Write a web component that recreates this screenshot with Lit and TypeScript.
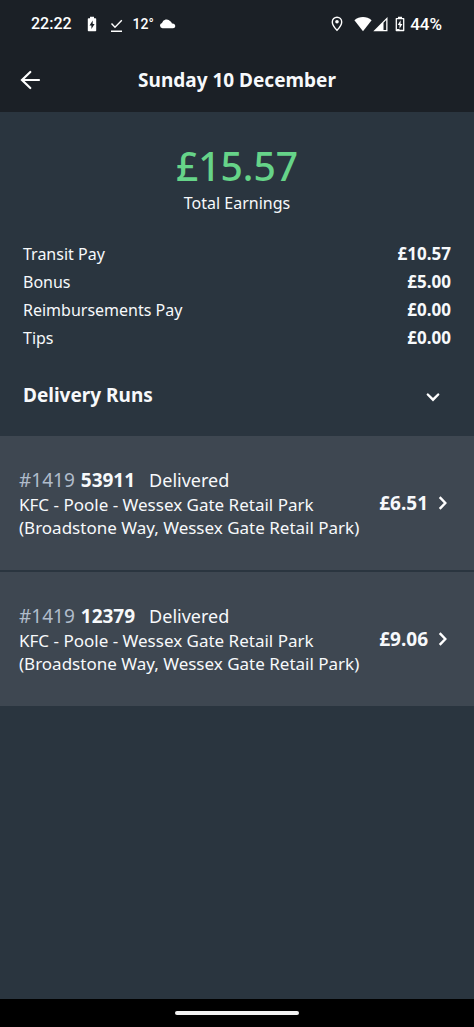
import { LitElement, html, css } from "lit";
import { customElement, property, state } from "lit/decorators.js";

interface Run {
  store: string;
  order: string;
  status: string;
  place: string;
  address: string;
  amount: string;
}

@customElement("status-bar")
class StatusBar extends LitElement {
  static styles = css`
    :host {
      display: flex;
      justify-content: space-between;
      align-items: center;
      height: 48px;
      padding: 0 32px 0 31px;
      color: #fff;
      font: 500 16px/24px Roboto, sans-serif;
    }
    .group {
      display: flex;
      align-items: center;
    }
    .battery { margin-left: 15px; }
    .check { margin: 4px 0 0 13px; }
    .temp { margin-left: 10px; font-size: 14px; }
    .cloud { margin-left: 5px; }
    .wifi { margin-left: 11px; }
    .signal { margin-left: 1px; }
    .charge { margin: 0 5px 0 7px; }
    .level { font-size: 17px; }
    svg { display: block; }
  `;
  render() {
    return html`
      <div class="group">
        <span>22:22</span>
        <svg class="battery" width="10" height="16" viewBox="0 0 10 16" fill="#fff" aria-hidden="true">
          <path fill-rule="evenodd" d="M3 .8h4v1.500h1.500q.7 0 .7.700v11.500q0 .7-.7.700H1.500q-.7 0-.7-.700V3q0-.7.700-.700H3zM5.700 4.500 2.500 9.500h1.900V13l3.200-5.100H5.700z" />
        </svg>
        <svg class="check" width="13" height="14" viewBox="0 0 13 14" fill="none" stroke="#fff" stroke-width="1.400" aria-hidden="true">
          <path d="m1.500 4.500 3.500 3.800 6.800-7M1 12.300h11" />
        </svg>
        <span class="temp">12°</span>
        <svg class="cloud" width="17" height="12" viewBox="0 0 17 12" fill="#fff" aria-hidden="true">
          <path d="M3.500 10.300a2.700 2.700 0 0 1-.5-5.300A4.800 4.800 0 0 1 11.300 3.200c1 .7 1.300 1.500 1.700 2.300a3 3 0 0 1 3.300 2.700 2.300 2.300 0 0 1-2.300 2.100z" />
        </svg>
      </div>
      <div class="group">
        <svg width="12" height="16" viewBox="0 0 12 16" aria-hidden="true">
          <path d="M6 1.200a4.700 4.700 0 0 0-4.700 4.700C1.300 9.300 6 14.300 6 14.300s4.700-5 4.700-8.400A4.700 4.700 0 0 0 6 1.200z" fill="none" stroke="#fff" stroke-width="1.400" />
          <circle cx="6" cy="5.800" r="1.800" fill="#fff" />
        </svg>
        <svg class="wifi" width="18" height="16" viewBox="0 0 18 16" fill="#fff" aria-hidden="true">
          <path d="M9 15.300.4 4.200C5.200-.2 12.800-.2 17.600 4.200z" />
        </svg>
        <svg class="signal" width="15" height="16" viewBox="0 0 15 16" aria-hidden="true">
          <path fill="#fff" fill-rule="evenodd" d="M14.500 1v14.200H.3zM10.500 6.700v7.200h2.700V4z" />
        </svg>
        <svg class="charge" width="10" height="16" viewBox="0 0 10 16" aria-hidden="true">
          <path d="M1.300 2.700h7.400v11.800H1.300z" fill="none" stroke="#fff" stroke-width="1.300" stroke-linejoin="round" />
          <path d="M3 .8h4v2H3zM5.600 4.200 2.700 9h1.800v3.800l2.900-4.900H5.600zM2 13h2.500v1H2z" fill="#fff" />
        </svg>
        <span class="level">44%</span>
      </div>
    `;
  }
}

@customElement("delivery-run")
class DeliveryRun extends LitElement {
  @property({ attribute: false }) run!: Run;

  static styles = css`
    :host { display: block; }
    .card {
      display: flex;
      align-items: center;
      justify-content: space-between;
      padding: 31px 26px 31px 19px;
      background: #3e4751;
      color: #f7f9fb;
      text-decoration: none;
    }
    .line {
      display: flex;
      align-items: baseline;
      font-size: 19px;
      line-height: 26px;
    }
    .store { color: #b0bccb; }
    .order { margin-left: 6px; font-weight: 700; }
    .status { margin-left: 14px; font-size: 18px; }
    .place {
      margin: 0;
      font-size: 17px;
      line-height: 23px;
    }
    .total {
      display: flex;
      align-items: center;
      gap: 10px;
      font-size: 19px;
      line-height: 24px;
      font-weight: 700;
      white-space: nowrap;
    }
    svg { display: block; }
  `;
  render() {
    const r = this.run;
    return html`
      <a class="card" href="#run-${r.order}">
        <div>
          <div class="line">
            <span class="store">#${r.store}</span>
            <span class="order">${r.order}</span>
            <span class="status">${r.status}</span>
          </div>
          <p class="place">${r.place}<br />${r.address}</p>
        </div>
        <div class="total">
          <span>${r.amount}</span>
          <svg width="10" height="14" viewBox="0 0 10 14" fill="none" stroke="#fff" stroke-width="2.400" aria-hidden="true">
            <path d="m1.700 1.200 5.600 5.800-5.600 5.800" />
          </svg>
        </div>
      </a>
    `;
  }
}

@customElement("app-root")
class AppRoot extends LitElement {
  @state() private open = true;

  private pay = [
    ["Transit Pay", "£10.57"],
    ["Bonus", "£5.00"],
    ["Reimbursements Pay", "£0.00"],
    ["Tips", "£0.00"],
  ];

  private runs: Run[] = ["53911:£6.51", "12379:£9.06"].map((s) => {
    const [order, amount] = s.split(":");
    return {
      store: "1419",
      order,
      amount,
      status: "Delivered",
      place: "KFC - Poole - Wessex Gate Retail Park",
      address: "(Broadstone Way, Wessex Gate Retail Park)",
    };
  });

  static styles = css`
    :host {
      display: flex;
      flex-direction: column;
      min-height: 100vh;
      background: #2a353f;
      color: #f7f9fb;
      font-family: "Noto Sans", sans-serif;
    }
    .top { background: #1b2026; }
    .bar {
      display: grid;
      grid-template-columns: 24px 1fr 24px;
      align-items: center;
      height: 64px;
      padding: 0 18px;
    }
    h1 {
      margin: 0;
      text-align: center;
      font-size: 19px;
      line-height: 24px;
      font-weight: 700;
    }
    button {
      border: 0;
      padding: 0;
      background: none;
      color: inherit;
      font: inherit;
      cursor: pointer;
    }
    svg { display: block; }
    .summary { padding: 30px 23px 0; }
    .amount {
      margin: 0;
      text-align: center;
      color: #66d489;
      font-size: 39px;
      line-height: 48px;
      font-weight: 500;
    }
    .caption {
      margin: 0;
      text-align: center;
      font-size: 16px;
      line-height: 26px;
    }
    .pay {
      margin: 24px 0 0;
      font-size: 16px;
      line-height: 28px;
    }
    .row {
      display: flex;
      justify-content: space-between;
    }
    dd { margin: 0; font-size: 17px; font-weight: 700; }
    h2 { margin: 0; font-size: 19px; }
    .toggle {
      display: flex;
      align-items: center;
      justify-content: space-between;
      width: 100%;
      padding: 29px 34px 27px 23px;
      line-height: 28px;
      font-weight: 700;
      text-align: left;
    }
    .toggle svg { margin-top: 4px; }
    .runs {
      display: grid;
      gap: 2px;
    }
    .nav {
      display: grid;
      place-items: center;
      height: 28px;
      margin-top: auto;
      background: #000;
    }
    .handle {
      width: 124px;
      height: 4px;
      border-radius: 2px;
      background: #f2f2f2;
    }
  `;

  render() {
    return html`
      <header class="top">
        <status-bar></status-bar>
        <div class="bar">
          <button aria-label="Back">
            <svg width="24" height="24" viewBox="0 0 24 24" fill="none" stroke="#fff" stroke-width="2.200" stroke-linecap="round" aria-hidden="true">
              <path d="M21 12H4.500M12.300 4 4 12l8.300 8" />
            </svg>
          </button>
          <h1>Sunday 10 December</h1>
        </div>
      </header>
      <section class="summary">
        <p class="amount">£15.57</p>
        <p class="caption">Total Earnings</p>
        <dl class="pay">
          ${this.pay.map(([k, v]) => html`<div class="row"><dt>${k}</dt><dd>${v}</dd></div>`)}
        </dl>
      </section>
      <h2>
        <button class="toggle" aria-expanded=${this.open} @click=${() => (this.open = !this.open)}>
          <span>Delivery Runs</span>
          <svg width="14" height="10" viewBox="0 0 14 10" fill="none" stroke="#fff" stroke-width="2.400" stroke-linecap="round" aria-hidden="true">
            <path d="m1.800 2.500 5.200 5.200 5.200-5.200" />
          </svg>
        </button>
      </h2>
      ${this.open
        ? html`<div class="runs">${this.runs.map((r) => html`<delivery-run .run=${r}></delivery-run>`)}</div>`
        : null}
      <div class="nav"><div class="handle"></div></div>
    `;
  }
}
